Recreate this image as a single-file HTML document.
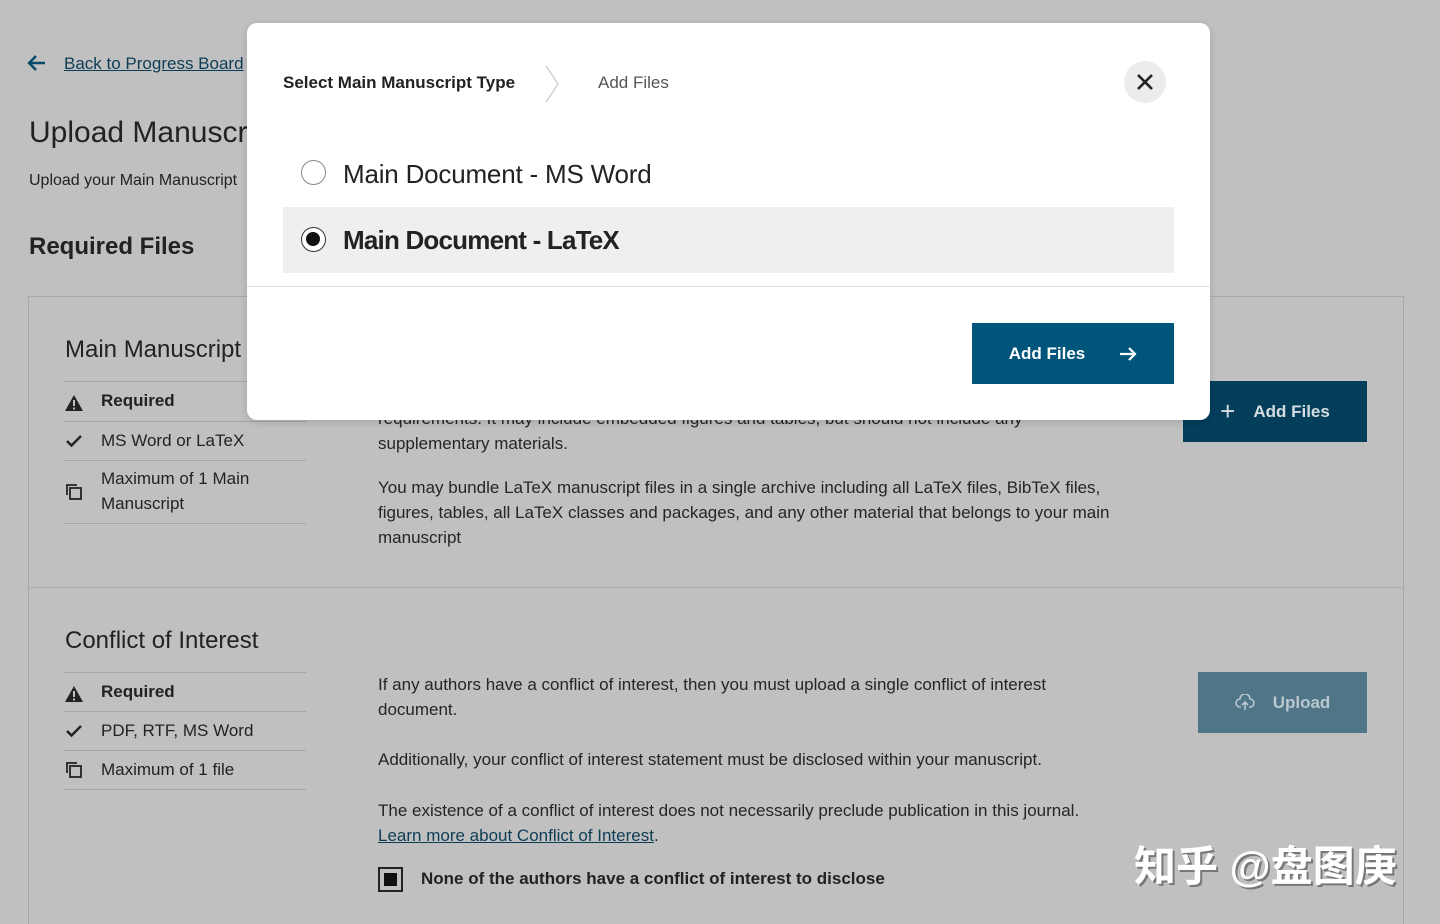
<!DOCTYPE html>
<html style="width:1440px;height:924px;overflow:hidden"><head><meta charset="utf-8">
<style>
*{margin:0;padding:0;box-sizing:border-box}
body{width:1440px;height:924px;overflow:hidden;background:#c0c0c0;font-family:"Liberation Sans","Noto Sans CJK SC",sans-serif;color:#222;position:relative}
.a{position:absolute;white-space:nowrap}
.card{position:absolute;left:28px;width:1376px;border:1px solid #a9a9a9}
.li{position:absolute;left:64px;width:242px;border-top:1px solid #a5a5a5}
.li span{position:absolute;left:37px;font-size:17px}
.t{font-size:17px;line-height:25px;color:#252525}
.btn{position:absolute;color:#fff;font-weight:bold;font-size:17px;display:flex;align-items:center;justify-content:center}
</style></head><body>
<svg class="a" style="left:27px;top:54px" width="20" height="18" viewBox="0 0 20 18"><path d="M18 9H3M9 2L2 9l7 7" stroke="#044a6a" stroke-width="2.4" fill="none"/></svg>
<div class="a" style="left:64px;top:54px;font-size:17px;color:#0d3d55;text-decoration:underline">Back to Progress Board</div>
<div class="a" style="left:29px;top:116px;font-size:30px;color:#222">Upload Manuscript</div>
<div class="a" style="left:29px;top:172px;font-size:16px">Upload your Main Manuscript</div>
<div class="a" style="left:29px;top:233px;font-size:24px;font-weight:bold;color:#222">Required Files</div>

<div class="card" style="top:296px;height:292px"></div>
<div class="card" style="top:587px;height:345px"></div>

<div class="a" style="left:65px;top:336px;font-size:24px">Main Manuscript</div>
<div class="li" style="top:381px;height:40px"><svg class="a" style="left:0;top:12px" width="20" height="18" viewBox="0 0 20 18"><path d="M10 1L19 17H1Z" fill="#222"/><rect x="9" y="6" width="2" height="6" fill="#c0c0c0"/><rect x="9" y="13.5" width="2" height="2" fill="#c0c0c0"/></svg><span style="top:9px;font-weight:bold">Required</span></div>
<div class="li" style="top:421px;height:40px"><svg class="a" style="left:1px;top:11px" width="18" height="16" viewBox="0 0 18 16"><path d="M2 8l4.5 4.5L16 3" stroke="#222" stroke-width="2.4" fill="none"/></svg><span style="top:9px">MS Word or LaTeX</span></div>
<div class="li" style="top:460px;height:64px;border-bottom:1px solid #a5a5a5"><svg class="a" style="left:1px;top:22px" width="18" height="18" viewBox="0 0 18 18"><path d="M2 12V2h10" stroke="#222" stroke-width="1.8" fill="none"/><rect x="5" y="5" width="11" height="11" stroke="#222" stroke-width="1.8" fill="none"/></svg><span style="top:5px;line-height:25px;white-space:normal;width:180px">Maximum of 1 Main Manuscript</span></div>

<div class="a t" style="left:378px;top:406px">requirements. It may include embedded figures and tables, but should not include any</div>
<div class="a t" style="left:378px;top:431px">supplementary materials.</div>
<div class="a t" style="left:378px;top:475px">You may bundle LaTeX manuscript files in a single archive including all LaTeX files, BibTeX files,</div>
<div class="a t" style="left:378px;top:500px">figures, tables, all LaTeX classes and packages, and any other material that belongs to your main</div>
<div class="a t" style="left:378px;top:525px">manuscript</div>

<div class="btn" style="left:1183px;top:381px;width:184px;height:61px;background:#033e5b;color:#d6dde2"><span style="font-size:26px;font-weight:normal;margin-right:18px">+</span>Add Files</div>

<div class="a" style="left:65px;top:627px;font-size:24px">Conflict of Interest</div>
<div class="li" style="top:672px;height:40px"><svg class="a" style="left:0;top:12px" width="20" height="18" viewBox="0 0 20 18"><path d="M10 1L19 17H1Z" fill="#222"/><rect x="9" y="6" width="2" height="6" fill="#c0c0c0"/><rect x="9" y="13.5" width="2" height="2" fill="#c0c0c0"/></svg><span style="top:9px;font-weight:bold">Required</span></div>
<div class="li" style="top:711px;height:40px"><svg class="a" style="left:1px;top:11px" width="18" height="16" viewBox="0 0 18 16"><path d="M2 8l4.5 4.5L16 3" stroke="#222" stroke-width="2.4" fill="none"/></svg><span style="top:9px">PDF, RTF, MS Word</span></div>
<div class="li" style="top:750px;height:40px;border-bottom:1px solid #a5a5a5"><svg class="a" style="left:1px;top:10px" width="18" height="18" viewBox="0 0 18 18"><path d="M2 12V2h10" stroke="#222" stroke-width="1.8" fill="none"/><rect x="5" y="5" width="11" height="11" stroke="#222" stroke-width="1.8" fill="none"/></svg><span style="top:9px">Maximum of 1 file</span></div>

<div class="a t" style="left:378px;top:672px">If any authors have a conflict of interest, then you must upload a single conflict of interest</div>
<div class="a t" style="left:378px;top:697px">document.</div>
<div class="a t" style="left:378px;top:747px">Additionally, your conflict of interest statement must be disclosed within your manuscript.</div>
<div class="a t" style="left:378px;top:798px">The existence of a conflict of interest does not necessarily preclude publication in this journal.</div>
<div class="a t" style="left:378px;top:823px"><span style="color:#0d3d55;text-decoration:underline">Learn more about Conflict of Interest</span>.</div>
<div class="a" style="left:378px;top:867px;width:25px;height:25px;border:2px solid #222;background:#c0c0c0"><div style="position:absolute;left:4px;top:4px;width:13px;height:13px;background:#111"></div></div>
<div class="a" style="left:421px;top:869px;font-size:17px;font-weight:bold">None of the authors have a conflict of interest to disclose</div>

<div class="btn" style="left:1198px;top:672px;width:169px;height:61px;background:#4f7587;color:#b9c7cf"><svg width="20" height="18" viewBox="0 0 20 18" style="margin-right:18px"><path d="M6 13H5a4 4 0 0 1 0-8 5 5 0 0 1 10 0 4 4 0 0 1 0 8h-1M10 16V8M7 11l3-3 3 3" stroke="#b9c7cf" stroke-width="1.6" fill="none"/></svg>Upload</div>

<div class="a" style="left:1134px;top:833px;font-size:42px;font-weight:bold;color:#fff;text-shadow:2px 2px 0 #777">知乎 @盘图庚</div>

<div class="a" style="left:247px;top:23px;width:963px;height:397px;background:#fff;border-radius:10px;box-shadow:0 2px 8px rgba(0,0,0,.15)">
  <div class="a" style="left:36px;top:50px;font-size:17px;font-weight:bold;color:#222">Select Main Manuscript Type</div>
  <svg class="a" style="left:297px;top:42px" width="16" height="38" viewBox="0 0 16 38"><path d="M2 1l12 18L2 37" stroke="#ccc" stroke-width="1.3" fill="none"/></svg>
  <div class="a" style="left:351px;top:50px;font-size:17px;color:#555">Add Files</div>
  <div class="a" style="left:877px;top:38px;width:42px;height:42px;border-radius:50%;background:#ececec"><svg style="position:absolute;left:12px;top:12px" width="18" height="18" viewBox="0 0 18 18"><path d="M2 2l14 14M16 2L2 16" stroke="#222" stroke-width="2.6"/></svg></div>
  <div class="a" style="left:54px;top:137px;width:25px;height:25px;border:1.5px solid #888;border-radius:50%"></div>
  <div class="a" style="left:96px;top:136px;font-size:26px;color:#222;letter-spacing:-0.2px">Main Document - MS Word</div>
  <div class="a" style="left:36px;top:184px;width:891px;height:66px;background:#efefef"></div>
  <div class="a" style="left:54px;top:204px;width:25px;height:25px;border:1.5px solid #333;border-radius:50%;background:#fff"><div style="position:absolute;left:4px;top:4px;width:14px;height:14px;border-radius:50%;background:#111"></div></div>
  <div class="a" style="left:96px;top:202px;font-size:26px;font-weight:bold;color:#222;letter-spacing:-0.8px">Main Document - LaTeX</div>
  <div class="a" style="left:0;top:263px;width:963px;height:1px;background:#ddd"></div>
  <div class="btn" style="left:725px;top:300px;width:202px;height:61px;background:#00557a"><span>Add Files</span><svg width="18" height="16" viewBox="0 0 18 16" style="margin-left:34px"><path d="M1 8h15M10 2l6 6-6 6" stroke="#fff" stroke-width="2.2" fill="none"/></svg></div>
</div>
</body></html>
